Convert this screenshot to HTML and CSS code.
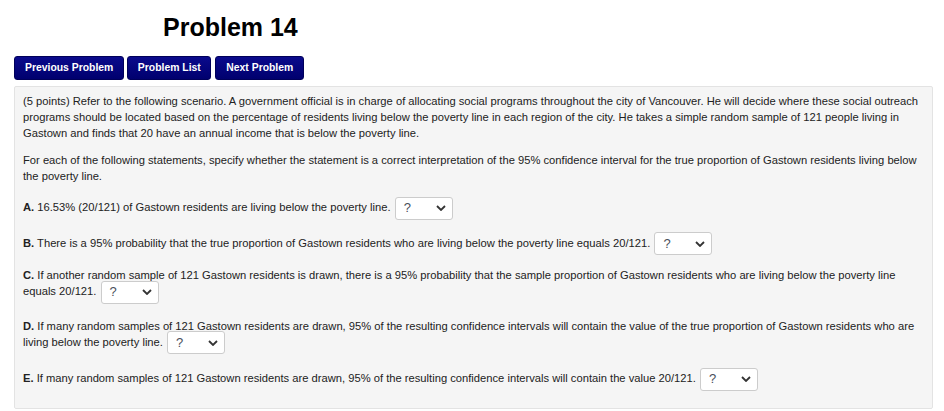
FILE: index.html
```html
<!DOCTYPE html>
<html>
<head>
<meta charset="utf-8">
<link rel="stylesheet" href="styles.css">
</head>
<body>
<div class="page">
  <h1 class="title">Problem 14</h1>
  <div class="nav">
    <a class="btn">Previous Problem</a>
    <a class="btn">Problem List</a>
    <a class="btn">Next Problem</a>
  </div>
  <div class="panel">
    <p class="para">(5 points) Refer to the following scenario. A government official is in charge of allocating social programs throughout the city of Vancouver. He will decide where these social outreach programs should be located based on the percentage of residents living below the poverty line in each region of the city. He takes a simple random sample of 121 people living in Gastown and finds that 20 have an annual income that is below the poverty line.</p>
    <p class="para para-last">For each of the following statements, specify whether the statement is a correct interpretation of the 95% confidence interval for the true proportion of Gastown residents living below the poverty line.</p>
    <p class="item"><b>A.</b> 16.53% (20/121) of Gastown residents are living below the poverty line. <span class="sel"><span class="q">?</span><svg class="chev" viewBox="0 0 10 6" width="10" height="6"><path d="M1 1 L5 5 L9 1" fill="none" stroke="#333" stroke-width="1.8"/></svg></span></p>
    <p class="item item-tight"><b>B.</b> There is a 95% probability that the true proportion of Gastown residents who are living below the poverty line equals 20/121. <span class="sel"><span class="q">?</span><svg class="chev" viewBox="0 0 10 6" width="10" height="6"><path d="M1 1 L5 5 L9 1" fill="none" stroke="#333" stroke-width="1.8"/></svg></span></p>
    <p class="item item-c"><b>C.</b> If another random sample of 121 Gastown residents is drawn, there is a 95% probability that the sample proportion of Gastown residents who are living below the poverty line equals 20/121. <span class="sel"><span class="q">?</span><svg class="chev" viewBox="0 0 10 6" width="10" height="6"><path d="M1 1 L5 5 L9 1" fill="none" stroke="#333" stroke-width="1.8"/></svg></span></p>
    <p class="item item-loose"><b>D.</b> If many random samples of 121 Gastown residents are drawn, 95% of the resulting confidence intervals will contain the value of the true proportion of Gastown residents who are living below the poverty line. <span class="sel"><span class="q">?</span><svg class="chev" viewBox="0 0 10 6" width="10" height="6"><path d="M1 1 L5 5 L9 1" fill="none" stroke="#333" stroke-width="1.8"/></svg></span></p>
    <p class="item"><b>E.</b> If many random samples of 121 Gastown residents are drawn, 95% of the resulting confidence intervals will contain the value 20/121. <span class="sel"><span class="q">?</span><svg class="chev" viewBox="0 0 10 6" width="10" height="6"><path d="M1 1 L5 5 L9 1" fill="none" stroke="#333" stroke-width="1.8"/></svg></span></p>
  </div>
</div>
</body>
</html>
```
FILE: styles.css
```css
html, body { margin: 0; padding: 0; background: #fff; }
body { font-family: "Liberation Sans", Arial, sans-serif; color: #222; }
.page { padding: 0 11px 0 14px; }
.title {
  margin: 0; padding: 12px 0 0 149px;
  font-size: 25px; font-weight: bold; color: #000; line-height: 30px;
}
.nav { display: flex; gap: 3px; margin-top: 14px; }
.btn {
  display: block; height: 24px; line-height: 22px; padding: 0 9.5px;
  background: linear-gradient(#0a0a8c, #00006e);
  color: #fff; font-size: 10.4px; font-weight: bold;
  border-radius: 3px; border: 1px solid #00005a; box-sizing: border-box;
}
.btn:first-child { padding: 0 10px; }
.btn + .btn + .btn { margin-left: 1px; padding: 0 10px; }
.panel {
  margin-top: 6px; background: #f5f5f5; border: 1px solid #e3e3e3;
  border-radius: 2px; padding: 6px 6px 10px 8px; height: 323px; box-sizing: border-box;
  font-size: 11.2px; line-height: 16px; color: #222;
}
.para { margin: 0 0 11px; }
.para-last { margin-bottom: 15px; }
.item { margin: 0 0 18px; }
.item-tight { margin-bottom: 15px; }
.item-c { margin-bottom: 17px; }
.item-loose { margin-bottom: 19px; }
.item b { font-weight: bold; }
.sel {
  display: inline-flex; align-items: center; justify-content: space-between;
  width: 58px; height: 23px; box-sizing: border-box; vertical-align: middle;
  background: #fff; border: 1px solid #ccc; border-radius: 3px;
  padding: 0 6px 0 8px; margin: -3px 0 -3px 1px; font-size: 13px; color: #555;
}
.q { color: #4a4f5a; }
.chev { display: block; }
```
